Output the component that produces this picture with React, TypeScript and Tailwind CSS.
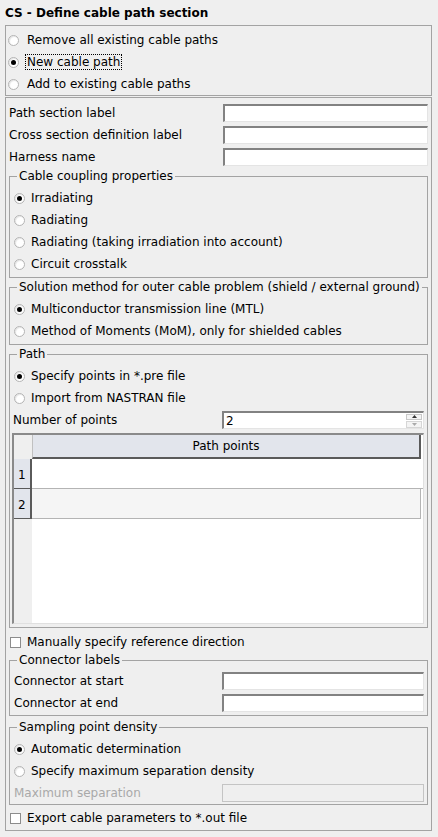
import React from 'react'

const Radio = ({ checked }: { checked?: boolean }) => (
    <span className="flex h-[11px] w-[11px] shrink-0 items-center justify-center rounded-full border border-[#b4b4b4] bg-white shadow-[inset_1px_1px_1px_rgba(0,0,0,0.1)]">
        {checked && <span className="h-[5px] w-[5px] rounded-full bg-black" />}
    </span>
)

const Check = () => <span className="h-[11px] w-[11px] shrink-0 border border-[#8c8c8c] bg-white" />

const Field = ({ w = 'w-[205px]', children }: { w?: string; children?: React.ReactNode }) => (
    <div
        className={`${w} flex h-[18px] items-center border-t-2 border-l-2 border-r border-b border-t-[#828282] border-l-[#828282] border-r-[#e4e4e4] border-b-[#e4e4e4] bg-white`}
    >
        {children}
    </div>
)

function RadioRow({ label, checked, focus, inGroup }: { label: string; checked?: boolean; focus?: boolean; inGroup?: boolean }) {
    return (
        <div className={`flex h-[22px] items-center ${inGroup ? 'gap-[6px] pl-[1px]' : 'gap-[8px] pl-[2px]'}`}>
            <Radio checked={checked} />
            <span className={focus ? 'border border-dotted border-black px-[1px] -ml-[2px]' : ''}>{label}</span>
        </div>
    )
}

function LabelRow({ label, fieldW, pad = 'pl-0' }: { label: string; fieldW?: string; pad?: string }) {
    return (
        <div className={`flex h-[22px] items-center justify-between ${pad}`}>
            <span>{label}</span>
            <Field w={fieldW} />
        </div>
    )
}

function Group({ title, className, children }: { title: string; className?: string; children: React.ReactNode }) {
    return (
        <fieldset className={`border border-[#a3a3a3] px-[3px] ${className ?? ''}`}>
            <legend className="ml-[4px] px-[2px] leading-[14px]">{title}</legend>
            {children}
        </fieldset>
    )
}

export default function App() {
    return (
        <div className="h-[837px] w-[438px] overflow-hidden bg-[#efefef] font-['DejaVu_Sans',sans-serif] text-[12px] leading-[14px] text-black">
            <div className="flex h-[25px] items-center pl-[5px] font-bold">CS - Define cable path section</div>

            <div className="ml-[5px] h-[71px] w-[427px] border border-[#a3a3a3] pt-[3px]">
                <RadioRow label="Remove all existing cable paths" />
                <RadioRow label="New cable path" checked focus />
                <RadioRow label="Add to existing cable paths" />
            </div>

            <div className="ml-[5px] mt-[1px] h-[734px] w-[427px] border border-[#a3a3a3] px-[3px] pt-[4px]">
                <LabelRow label="Path section label" />
                <LabelRow label="Cross section definition label" />
                <LabelRow label="Harness name" />

                <Group title="Cable coupling properties" className="mt-[1px] h-[109px]">
                    <div className="pt-[4px]">
                        <RadioRow inGroup label="Irradiating" checked />
                        <RadioRow inGroup label="Radiating" />
                        <RadioRow inGroup label="Radiating (taking irradiation into account)" />
                        <RadioRow inGroup label="Circuit crosstalk" />
                    </div>
                </Group>

                <Group title="Solution method for outer cable problem (shield / external ground)" className="mt-[2px] h-[65px]">
                    <div className="pt-[4px]">
                        <RadioRow inGroup label="Multiconductor transmission line (MTL)" checked />
                        <RadioRow inGroup label="Method of Moments (MoM), only for shielded cables" />
                    </div>
                </Group>

                <Group title="Path" className="mt-[2px] h-[281px]">
                    <div className="pt-[4px]">
                        <RadioRow inGroup label="Specify points in *.pre file" checked />
                        <RadioRow inGroup label="Import from NASTRAN file" />
                        <div className="flex h-[22px] items-center justify-between">
                            <span>Number of points</span>
                            <Field w="w-[202px]">
                                <span className="flex-1 pl-[2px]">2</span>
                                <span className="mr-[1px] flex flex-col gap-[1px]">
                                    <span className="flex h-[6px] w-[16px] items-center justify-center border border-[#c8c8c8] bg-[#f4f4f4]">
                                        <svg width="5" height="3" viewBox="0 0 5 3"><path d="M0 3L2.5 0L5 3Z" fill="#333" /></svg>
                                    </span>
                                    <span className="flex h-[7px] w-[16px] items-center justify-center border border-[#d6d6d6] bg-[#f4f4f4]">
                                        <svg width="5" height="3" viewBox="0 0 5 3"><path d="M0 0L2.5 3L5 0Z" fill="#aaa" /></svg>
                                    </span>
                                </span>
                            </Field>
                        </div>
                        <div className="ml-[-1px] mt-[2px] flex h-[191px] w-[412px] flex-col border-t-2 border-l-2 border-r border-b border-t-[#8a8a8a] border-l-[#8a8a8a] border-r-[#e0e0e0] border-b-[#e0e0e0] bg-white">
                            <div className="flex h-[24px]">
                                <div className="w-[18px] bg-[#efefef]" />
                                <div className="flex flex-1 items-center justify-center border-r-2 border-b-2 border-[#5a5a5a] border-l border-l-[#c0c0c0] bg-[#e2e5ec]">
                                    Path points
                                </div>
                                <div className="w-[2px]" />
                            </div>
                            <div className="flex h-[30px]">
                                <div className="flex w-[18px] items-end border-r-2 border-b border-r-[#5a5a5a] border-b-[#5a5a5a] bg-[#e2e5ec] pb-[6px] pl-[4px]">1</div>
                                <div className="flex-1 border-b border-[#b4b4b4] bg-white" />
                                <div className="w-[2px] border-b border-[#b4b4b4]" />
                            </div>
                            <div className="flex h-[30px]">
                                <div className="flex w-[18px] items-end border-r-2 border-b border-r-[#5a5a5a] border-b-[#5a5a5a] bg-[#e2e5ec] pb-[6px] pl-[4px]">2</div>
                                <div className="flex-1 border-b border-r border-[#b4b4b4] bg-[#f5f5f5]" />
                                <div className="w-[2px]" />
                            </div>
                            <div className="flex flex-1">
                                <div className="w-[18px] bg-[#efefef]" />
                                <div className="flex-1 bg-white" />
                            </div>
                        </div>
                    </div>
                </Group>

                <div className="flex h-[24px] items-center gap-[6px] pl-[1px] pt-[4px]">
                    <Check />
                    <span>Manually specify reference direction</span>
                </div>

                <Group title="Connector labels" className="mt-[1px] h-[63px]">
                    <div className="pt-[3px]">
                        <LabelRow label="Connector at start" fieldW="w-[202px]" pad="pl-[1px]" />
                        <LabelRow label="Connector at end" fieldW="w-[202px]" pad="pl-[1px]" />
                    </div>
                </Group>

                <Group title="Sampling point density" className="mt-[4px] h-[85px]">
                    <div className="pt-[4px]">
                        <RadioRow inGroup label="Automatic determination" checked />
                        <RadioRow inGroup label="Specify maximum separation density" />
                        <div className="flex h-[21px] items-center justify-between pl-[1px]">
                            <span className="text-[#a9a9a9]">Maximum separation</span>
                            <div className="h-[18px] w-[202px] border border-[#c4c4c4] bg-[#efefef]" />
                        </div>
                    </div>
                </Group>

                <div className="flex h-[26px] items-center gap-[6px] pl-[1px]">
                    <Check />
                    <span>Export cable parameters to *.out file</span>
                </div>
            </div>
        </div>
    )
}
